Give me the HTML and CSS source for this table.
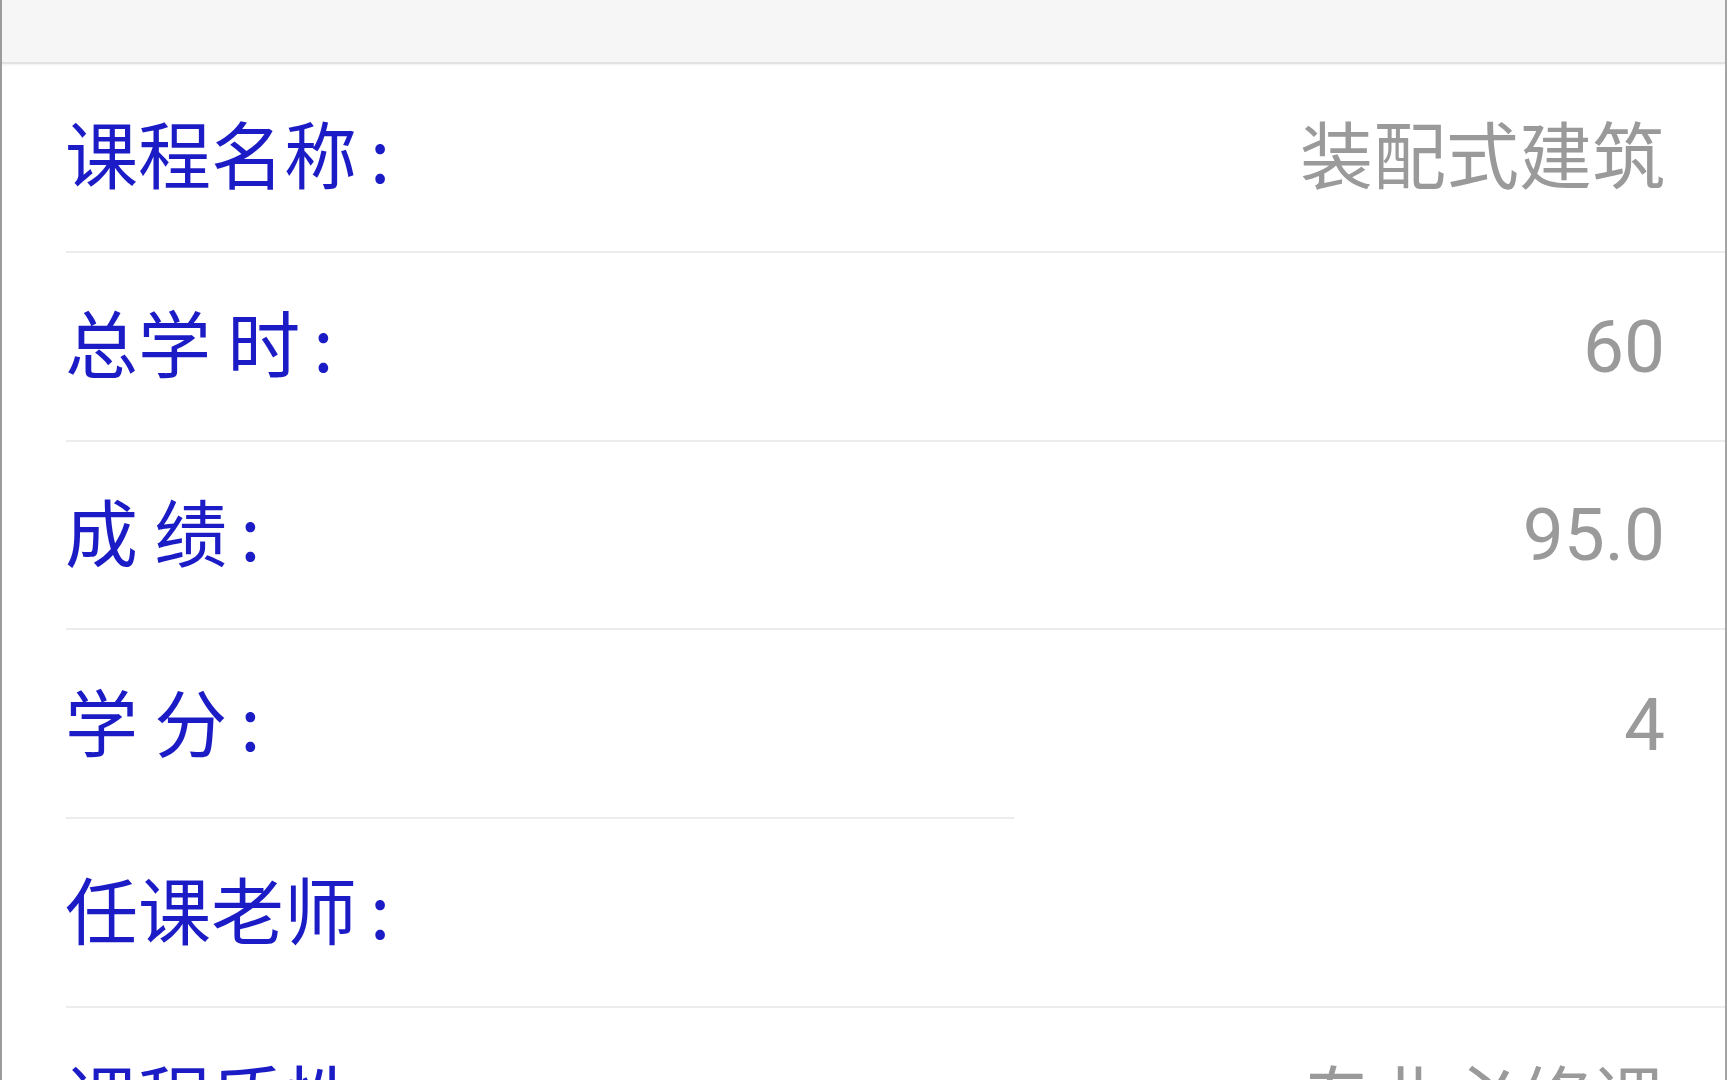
FILE: index.html
```html
<!DOCTYPE html>
<html lang="zh-CN">
<head>
<meta charset="utf-8">
<title>课程详情</title>
<link rel="stylesheet" href="styles.css">
</head>
<body>
<div class="frame">
  <header class="topbar"></header>
  <main class="list">
    <div class="row">
      <span class="label">课程名称<span class="colon">:</span></span>
      <span class="value">装配式建筑</span>
    </div>
    <div class="row">
      <span class="label">总学 时<span class="colon">:</span></span>
      <span class="value">60</span>
    </div>
    <div class="row">
      <span class="label">成 绩<span class="colon">:</span></span>
      <span class="value">95.0</span>
    </div>
    <div class="row row--short">
      <span class="label">学 分<span class="colon">:</span></span>
      <span class="value">4</span>
    </div>
    <div class="row">
      <span class="label">任课老师<span class="colon">:</span></span>
      <span class="value"></span>
    </div>
    <div class="row">
      <span class="label">课程质性<span class="colon">:</span></span>
      <span class="value">专业必修课</span>
    </div>
  </main>
</div>
</body>
</html>
```

FILE: styles.css
```css
html, body {
  margin: 0;
  padding: 0;
  background: #ffffff;
  overflow: hidden;
}

body {
  width: 1728px;
  height: 1080px;
  font-family: "Noto Sans CJK SC", "Noto Sans", sans-serif;
}

.frame {
  box-sizing: border-box;
  width: 1727px;
  height: 1080px;
  border-left: 2px solid #9c9c9c;
  border-right: 2px solid #a4a4a4;
  overflow: hidden;
  background: #ffffff;
}

.topbar {
  height: 62px;
  background: #f6f6f6;
  border-bottom: 2px solid #e2e2e2;
  box-shadow: 0 1px 2px rgba(0, 0, 0, 0.06);
}

.list {
  padding-left: 64px;
}

.row {
  box-sizing: border-box;
  height: 188.8px;
  display: flex;
  align-items: center;
  justify-content: space-between;
  padding-right: 60px;
  padding-bottom: 6px;
  border-bottom: 2px solid #ececec;
  font-size: 72px;
  line-height: 1;
  white-space: pre;
}

.row--short {
  border-bottom: none;
  position: relative;
}

.row--short::after {
  content: "";
  position: absolute;
  left: 0;
  bottom: 0;
  width: 948px;
  height: 2px;
  background: #ececec;
}

.label {
  color: #1c1cc6;
  font-size: 73px;
  font-weight: 400;
  margin-left: -1px;
  padding-bottom: 5px;
}

.colon {
  margin-left: 13px;
}

.value {
  color: #9a9a9a;
  font-family: "Roboto", "Noto Sans CJK SC", sans-serif;
  font-size: 73px;
  padding-top: 8px;
}
```
